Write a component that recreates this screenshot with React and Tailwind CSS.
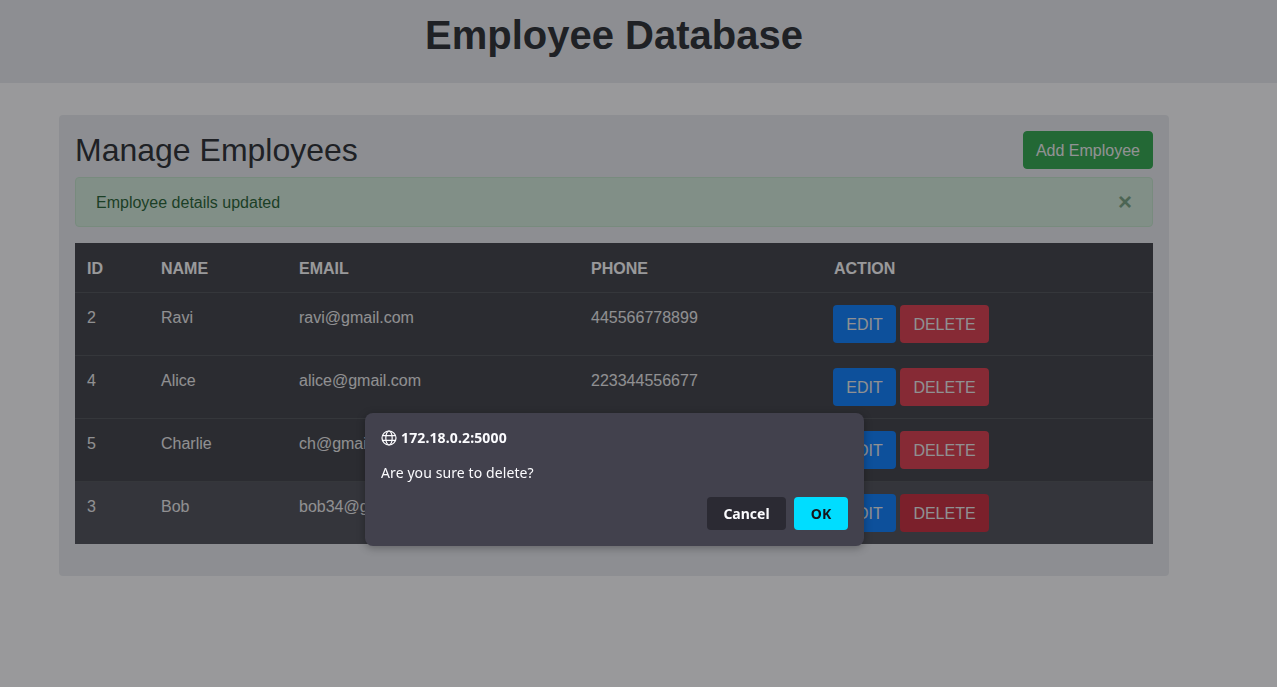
const rows = [
  { id: 2, name: "Ravi", email: "ravi@gmail.com", phone: "445566778899" },
  { id: 4, name: "Alice", email: "alice@gmail.com", phone: "223344556677" },
  { id: 5, name: "Charlie", email: "ch@gmail.com", phone: "112233445566" },
  { id: 3, name: "Bob", email: "bob34@gmail.com", phone: "998877665544", hover: true },
];

function Globe() {
  return (
    <svg width="16" height="16" viewBox="0 0 16 16" fill="none" stroke="#fbfbfe" strokeWidth="1.2">
      <circle cx="8" cy="8" r="7" />
      <ellipse cx="8" cy="8" rx="3.2" ry="7" />
      <path d="M1.6 5.6h12.8M1.6 10.4h12.8" />
    </svg>
  );
}

export default function App() {
  return (
    <div className="relative min-h-screen bg-white font-['Liberation_Sans',sans-serif] text-base leading-6 text-[#212529]">
      <header className="h-[83px] bg-[#e9ecef]">
        <h1 className="w-[1228px] pt-[11px] text-center text-[40px] leading-[48px] font-bold">Employee Database</h1>
      </header>

      <main className="mt-8 ml-[59px] w-[1110px] rounded bg-[#e9ecef] p-4">
        <div className="mb-2 flex items-center justify-between">
          <h2 className="text-[32px] leading-[38px] font-normal">Manage Employees</h2>
          <button className="h-[38px] rounded border border-[#28a745] bg-[#28a745] px-3 pt-0.5 text-[#f2f2f2]">Add Employee</button>
        </div>

        <div className="mb-4 flex h-[50px] items-center justify-between rounded border border-[#c3e6cb] bg-[#d4edda] px-5 pt-0.5 text-[#1a5c2a]">
          <span>Employee details updated</span>
          <span className="-mt-0.5 text-2xl leading-none font-bold text-[#155724] opacity-50">×</span>
        </div>

        <table className="mb-4 w-full table-fixed border-collapse bg-[#383a3e] text-[#eeeeee]">
          <thead>
            <tr className="h-[49px] text-left text-white uppercase">
              <th className="w-[74px] border-b border-[#4a4d51] px-3 pt-1 align-middle">ID</th>
              <th className="w-[138px] border-b border-[#4a4d51] px-3 pt-1 align-middle">Name</th>
              <th className="w-[292px] border-b border-[#4a4d51] px-3 pt-1 align-middle">Email</th>
              <th className="w-[243px] border-b border-[#4a4d51] px-3 pt-1 align-middle">Phone</th>
              <th className="border-b border-[#4a4d51] px-3 pt-1 align-middle">Action</th>
            </tr>
          </thead>
          <tbody>
            {rows.map((r) => (
              <tr key={r.id} className={r.hover ? "bg-[#484a50]" : "border-b border-[#4a4d51]"}>
                <td className="px-3 pt-[13px] pb-[11px] align-top">{r.id}</td>
                <td className="px-3 pt-[13px] pb-[11px] align-top">{r.name}</td>
                <td className="px-3 pt-[13px] pb-[11px] align-top">{r.email}</td>
                <td className="px-3 pt-[13px] pb-[11px] align-top">{r.phone}</td>
                <td className="py-3 pr-3 pl-[11px] align-top">
                  <div className="flex gap-1">
                    <button className="h-[38px] w-[63px] rounded bg-[#007bff] pt-0.5 text-[#eeeeee]">EDIT</button>
                    <button className={"h-[38px] w-[89px] rounded pt-0.5 text-[#eeeeee] " + (r.hover ? "bg-[#c82333]" : "bg-[#dc3545]")}>DELETE</button>
                  </div>
                </td>
              </tr>
            ))}
          </tbody>
        </table>
      </main>

      <div className="fixed inset-0 bg-[#1c1d21]/45" />

      <div className="absolute top-[413px] left-[365px] flex h-[133px] w-[499px] flex-col rounded-lg bg-[#42414d] px-4 pt-[17px] font-['Noto_Sans',sans-serif] text-sm leading-4 text-[#fbfbfe] shadow-[0_2px_8px_rgba(0,0,0,0.3)]">
        <div className="flex items-center gap-1 font-bold tracking-[0.13px]">
          <Globe />
          <span>172.18.0.2:5000</span>
        </div>
        <p className="mt-[19px] tracking-[0.1px]">Are you sure to delete?</p>
        <div className="mt-4 flex justify-end gap-2">
          <button className="h-[33px] w-[79px] rounded bg-[#2b2a33] font-bold text-[#fbfbfe]">Cancel</button>
          <button className="h-[33px] w-[54px] rounded bg-[#00ddff] font-bold text-[#15141a]">OK</button>
        </div>
      </div>
    </div>
  );
}
